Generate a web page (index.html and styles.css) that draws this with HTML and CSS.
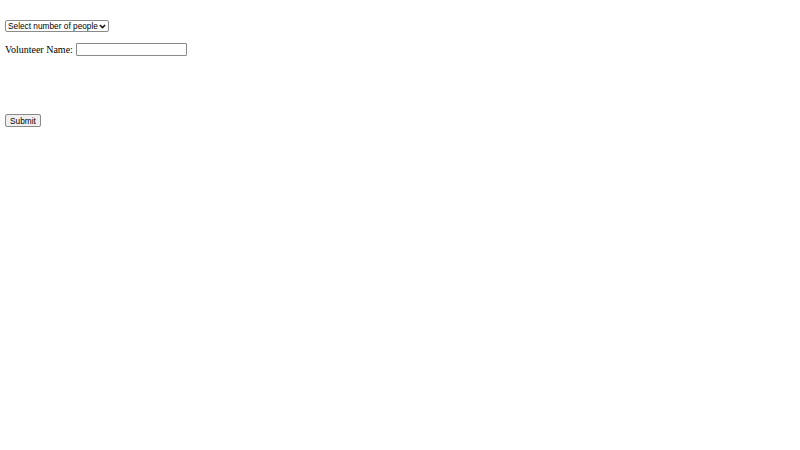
FILE: index.html
```html
<!DOCTYPE html>
<html>
<head>
<meta charset="utf-8">
<link rel="stylesheet" href="styles.css">
</head>
<body>
<form class="form">
  <div class="row row-select">
    <div class="select-box">
      <select class="select">
        <option>Select number of people</option>
      </select>
      <svg class="chev" width="7" height="5" viewBox="0 0 7 5"><path d="M0.9 1 L3.5 3.6 L6.1 1" fill="none" stroke="#111" stroke-width="1.5"/></svg>
    </div>
  </div>
  <div class="row row-name">
    <label class="label">Volunteer Name:</label>
    <input class="text" type="text">
  </div>
  <div class="row row-submit">
    <input class="submit" type="submit" value="Submit">
  </div>
</form>
</body>
</html>
```
FILE: styles.css
```css
html, body { background: #fff; }
body {
  margin: 5px;
  font-family: "Liberation Serif", serif;
  font-size: 10px;
  color: #000;
}
.form { margin: 0; }
.row { display: flex; align-items: center; }
.row-select { margin-top: 15px; height: 12px; }
.row-name { margin-top: 11px; height: 13px; gap: 3px; }
.row-submit { margin-top: 58px; height: 13px; }
.select-box {
  display: flex;
  align-items: center;
  box-sizing: border-box;
  height: 12px;
  width: 104px;
  padding: 0 2px 0 2px;
  gap: 1px;
  border: 1px solid #8a8a8a;
  border-radius: 2px;
  background: #fff;
}
.select {
  -webkit-appearance: none;
  appearance: none;
  font-family: "Liberation Sans", Arial, sans-serif;
  font-size: 8.3px;
  line-height: 10px;
  height: 10px;
  flex: 1;
  min-width: 0;
  padding: 0;
  margin: 0;
  border: none;
  outline: none;
  background: transparent;
  color: #000;
}
.chev { flex: none; }
.text {
  width: 111px;
  height: 13px;
  box-sizing: border-box;
  margin: 0;
  padding: 1px;
  border: 1px solid #8a8a8a;
  border-radius: 1px;
}
.submit {
  font-family: "Liberation Sans", Arial, sans-serif;
  font-size: 8.3px;
  width: 36px;
  height: 13px;
  box-sizing: border-box;
  padding: 0;
  margin: 0;
  border: 1px solid #8a8a8a;
  border-radius: 2px;
  background: #efefef;
  color: #000;
}
```
